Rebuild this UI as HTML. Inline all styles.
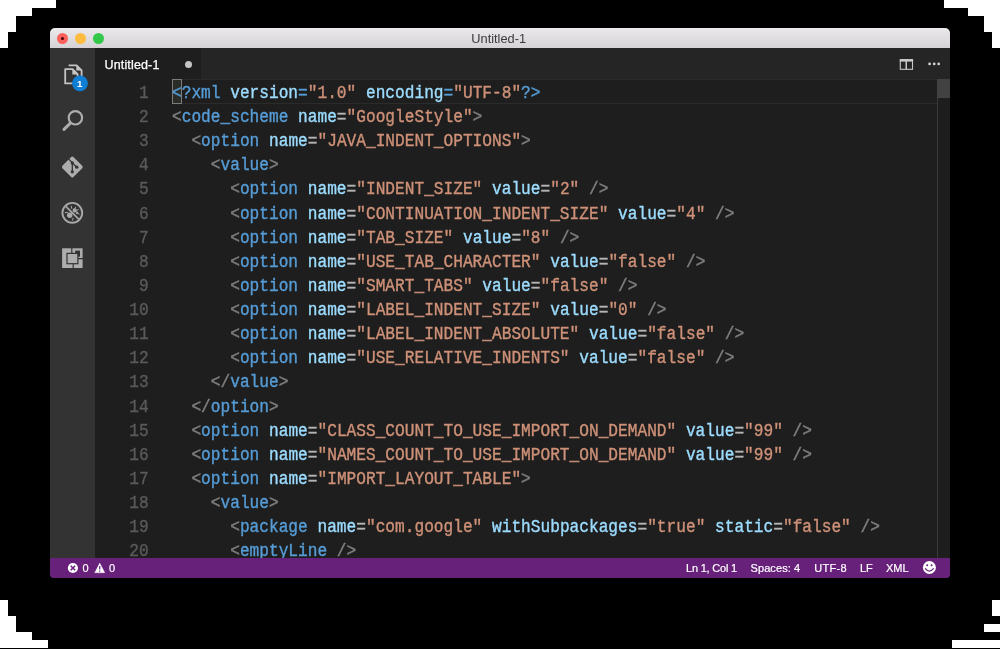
<!DOCTYPE html>
<html>
<head>
<meta charset="utf-8">
<title>Untitled-1</title>
<style>
  html, body { margin: 0; padding: 0; }
  body { width: 1000px; height: 649px; background: #000; overflow: hidden; position: relative; font-family: "Liberation Sans", sans-serif; }
  .w { position: absolute; background: #fff; }
  #win { will-change: transform; position: absolute; left: 50px; top: 28px; width: 900px; height: 550px; border-radius: 5px 5px 4px 4px; overflow: hidden; background: #1e1e1e; }
  #title { position: absolute; left: 0; top: 0; width: 900px; height: 20px; background: linear-gradient(#ebe9eb, #d4d2d4); }
  #title .t { position: absolute; left: -2.6px; right: 0; top: 0; height: 20px; line-height: 22.4px; text-align: center; font-size: 12.8px; color: #3a3a3a; }
  .tl { position: absolute; top: 5px; width: 11px; height: 11px; border-radius: 50%; }
  #act { position: absolute; left: 0; top: 20px; width: 45px; height: 510px; background: #333333; }
  #tabs { position: absolute; left: 45px; top: 20px; width: 855px; height: 31px; background: #252526; }
  #tab { position: absolute; left: 0; top: 0; width: 106px; height: 31px; background: #1e1e1e; color: #fff; font-size: 12.5px; line-height: 34px; }
  #tab span { position: absolute; left: 9.5px; letter-spacing: 0.15px; -webkit-text-stroke: 0.25px; }
  #tab i { position: absolute; left: 89.5px; top: 12.5px; width: 7px; height: 7px; border-radius: 50%; background: #c5c5c5; }
  #ed { position: absolute; left: 45px; top: 51px; width: 855px; height: 479px; background: #1e1e1e; overflow: hidden; }
  #cur { position: absolute; left: 77px; top: 0; width: 765px; height: 24.5px; box-sizing: border-box; border-top: 1px solid #2b2b2b; border-bottom: 1px solid #2b2b2b; }
  #bm { position: absolute; left: 76.5px; top: 0; width: 10.5px; height: 24.5px; box-sizing: border-box; border: 1px solid #7c7c7c; background: #2a2d27; }
  #code { position: absolute; left: 0; top: 0; font-family: "Liberation Mono", monospace; font-size: 16.17px; }
  .l { position: absolute; left: 0; height: 24px; line-height: 24px; white-space: pre; transform: scaleY(1.08); transform-origin: 0 16.3px; -webkit-text-stroke: 0.35px; }
  .n { position: absolute; left: 0; width: 53.6px; text-align: right; color: #5a5a5a; }
  .c { position: absolute; left: 77px; color: #808080; }
  .k { color: #569cd6; } .a { color: #9cdcfe; } .s { color: #ce9178; } .p { color: #808080; } .d { color: #b4b4b4; }
  #sb { position: absolute; left: 842px; top: 0; width: 13px; height: 479px; border-left: 1px solid #3a3a3a; box-sizing: border-box; }
  #sl { position: absolute; left: -1px; top: 0; width: 13px; height: 19px; background: #424242; }
  #status { position: absolute; left: 0; top: 530px; width: 900px; height: 20px; background: #68217a; color: #fff; font-size: 11px; line-height: 20px; }
  #status span { position: absolute; top: 0; white-space: pre; -webkit-text-stroke: 0.2px; }
</style>
</head>
<body>
<!-- corner artifacts -->
<div class="w" style="left:0;top:0;width:56px;height:8px"></div>
<div class="w" style="left:0;top:8px;width:32px;height:8px"></div>
<div class="w" style="left:0;top:16px;width:16px;height:16px"></div>
<div class="w" style="left:0;top:32px;width:8px;height:16px"></div>
<div class="w" style="left:944px;top:0;width:56px;height:8px"></div>
<div class="w" style="left:968px;top:8px;width:32px;height:8px"></div>
<div class="w" style="left:984px;top:16px;width:16px;height:16px"></div>
<div class="w" style="left:992px;top:32px;width:8px;height:16px"></div>
<div class="w" style="left:0;top:600px;width:8px;height:16px"></div>
<div class="w" style="left:0;top:616px;width:16px;height:16px"></div>
<div class="w" style="left:0;top:632px;width:32px;height:8px"></div>
<div class="w" style="left:0;top:640px;width:48px;height:8px"></div>
<div class="w" style="left:992px;top:600px;width:8px;height:16px"></div>
<div class="w" style="left:984px;top:624px;width:16px;height:8px"></div>
<div class="w" style="left:952px;top:640px;width:48px;height:8px"></div>

<div id="win">
  <div id="title">
    <div class="tl" style="left:7px;background:#fc605c"></div>
    <div class="tl" style="left:25px;background:#fdbc40"></div>
    <div class="tl" style="left:43px;background:#34c84a"></div>
    <div style="position:absolute;left:11px;top:9px;width:3px;height:3px;border-radius:50%;background:#4d0000"></div>
    <div class="t">Untitled-1</div>
  </div>
  <div id="act">
    <svg width="45" height="510" viewBox="0 0 45 510" style="position:absolute;left:0;top:0">
      <!-- explorer -->
      <g fill="none" stroke="#c4c4c4" stroke-width="1.8" stroke-linejoin="round">
        <path d="M18.6 17.3 H26.6 L31.6 22.3 V33.4 H28.4"/>
        <path d="M15.2 21.2 H22.6 L27.6 26.2 V35.4 H15.2 Z"/>
      </g>
      <path d="M22.3 21 V26.6 H27.9 Z" fill="#c4c4c4"/>
      <path d="M26.3 17 V22.6 H31.9 Z" fill="#c4c4c4"/>
      <circle cx="30" cy="35.3" r="7.9" fill="#0f7fd6"/>
      <text x="29.8" y="38.8" style="font-family:'Liberation Sans',sans-serif;font-weight:bold;font-size:9.8px" fill="#fff" text-anchor="middle">1</text>
      <!-- search -->
      <circle cx="25.4" cy="69.8" r="6.7" fill="none" stroke="#adadad" stroke-width="2.2"/>
      <path d="M20.4 75.1 L14 81.4" stroke="#adadad" stroke-width="3" stroke-linecap="round"/>
      <!-- git -->
      <rect x="14.5" y="111.2" width="15.6" height="15.6" rx="1.6" transform="rotate(45 22.3 119)" fill="#adadad"/>
      <g stroke="#333" stroke-width="1.3" fill="none">
        <path d="M18.6 110.9 L22.3 114.9 L26.8 119.2 M22.3 114.9 V123.8"/>
      </g>
      <circle cx="22.3" cy="114.9" r="1.6" fill="#333"/>
      <circle cx="26.8" cy="119.2" r="1.6" fill="#333"/>
      <circle cx="22.3" cy="123.8" r="1.6" fill="#333"/>
      <!-- debug -->
      <circle cx="22.3" cy="164.8" r="9.9" fill="none" stroke="#a8a8a8" stroke-width="1.9"/>
      <path d="M15.6 158.1 L29.2 171.6" stroke="#a8a8a8" stroke-width="1.7"/>
      <g fill="#a8a8a8">
        <circle cx="19.7" cy="167.3" r="2.7"/>
        <circle cx="24.7" cy="162.4" r="2.1"/>
        <circle cx="27" cy="164.8" r="1.2"/>
      </g>
      <g stroke="#a8a8a8" stroke-width="1" fill="none">
        <path d="M21.2 157.8 L21.8 160.8 M25.9 158.9 L24.5 161.1 M28.7 161.5 L26.3 162.6 M29.6 166.1 L27.2 165.5 M14.8 164.7 L18 164.3 M22.6 172.6 L23.1 169.8"/>
      </g>
      <!-- extensions -->
      <rect x="12.1" y="200.3" width="20.5" height="19.7" fill="#adadad"/>
      <g stroke="#333" stroke-width="1.2" fill="none">
        <path d="M21.8 200 V205.6 M23.2 215.6 V220.4 M27.9 210.6 H33"/>
        <rect x="17" y="205.4" width="10.9" height="10.3"/>
      </g>
      <rect x="25.2" y="202.6" width="4.8" height="3.4" fill="#333"/>
      <rect x="27.9" y="204.6" width="2.1" height="4" fill="#333"/>
    </svg>
  </div>
  <div id="tabs">
    <div id="tab"><span>Untitled-1</span><i></i></div>
    <svg width="60" height="31" viewBox="0 0 60 31" style="position:absolute;left:795px;top:0">
      <!-- page x = 890 + x ; page y = 48 + y -->
      <rect x="10.3" y="12.1" width="12.2" height="9.2" fill="none" stroke="#c8c8c8" stroke-width="1.1"/>
      <rect x="9.8" y="11" width="13.3" height="2.6" fill="#c8c8c8"/>
      <rect x="15.5" y="11.5" width="1.5" height="10" fill="#c8c8c8"/>
      <circle cx="39.6" cy="15.9" r="1.35" fill="#d4d4d4"/>
      <circle cx="44.2" cy="15.9" r="1.35" fill="#d4d4d4"/>
      <circle cx="48.7" cy="15.9" r="1.35" fill="#d4d4d4"/>
    </svg>
  </div>
  <div id="ed">
    <div id="cur"></div>
    <div id="bm"></div>
    <div id="code">
<div class="l" style="top:2.90px"><span class="n">1</span><span class="c"><span class="k">&lt;?xml</span> <span class="a">version</span><span class="k">=</span><span class="s">"1.0"</span> <span class="a">encoding</span><span class="k">=</span><span class="s">"UTF-8"</span><span class="k">?&gt;</span></span></div>
<div class="l" style="top:27.03px"><span class="n">2</span><span class="c">&lt;<span class="k">code_scheme</span> <span class="a">name</span><span class="d">=</span><span class="s">"GoogleStyle"</span>&gt;</span></div>
<div class="l" style="top:51.16px"><span class="n">3</span><span class="c">  &lt;<span class="k">option</span> <span class="a">name</span><span class="d">=</span><span class="s">"JAVA_INDENT_OPTIONS"</span>&gt;</span></div>
<div class="l" style="top:75.29px"><span class="n">4</span><span class="c">    &lt;<span class="k">value</span>&gt;</span></div>
<div class="l" style="top:99.42px"><span class="n">5</span><span class="c">      &lt;<span class="k">option</span> <span class="a">name</span><span class="d">=</span><span class="s">"INDENT_SIZE"</span> <span class="a">value</span><span class="d">=</span><span class="s">"2"</span> /&gt;</span></div>
<div class="l" style="top:123.55px"><span class="n">6</span><span class="c">      &lt;<span class="k">option</span> <span class="a">name</span><span class="d">=</span><span class="s">"CONTINUATION_INDENT_SIZE"</span> <span class="a">value</span><span class="d">=</span><span class="s">"4"</span> /&gt;</span></div>
<div class="l" style="top:147.68px"><span class="n">7</span><span class="c">      &lt;<span class="k">option</span> <span class="a">name</span><span class="d">=</span><span class="s">"TAB_SIZE"</span> <span class="a">value</span><span class="d">=</span><span class="s">"8"</span> /&gt;</span></div>
<div class="l" style="top:171.81px"><span class="n">8</span><span class="c">      &lt;<span class="k">option</span> <span class="a">name</span><span class="d">=</span><span class="s">"USE_TAB_CHARACTER"</span> <span class="a">value</span><span class="d">=</span><span class="s">"false"</span> /&gt;</span></div>
<div class="l" style="top:195.94px"><span class="n">9</span><span class="c">      &lt;<span class="k">option</span> <span class="a">name</span><span class="d">=</span><span class="s">"SMART_TABS"</span> <span class="a">value</span><span class="d">=</span><span class="s">"false"</span> /&gt;</span></div>
<div class="l" style="top:220.07px"><span class="n">10</span><span class="c">      &lt;<span class="k">option</span> <span class="a">name</span><span class="d">=</span><span class="s">"LABEL_INDENT_SIZE"</span> <span class="a">value</span><span class="d">=</span><span class="s">"0"</span> /&gt;</span></div>
<div class="l" style="top:244.20px"><span class="n">11</span><span class="c">      &lt;<span class="k">option</span> <span class="a">name</span><span class="d">=</span><span class="s">"LABEL_INDENT_ABSOLUTE"</span> <span class="a">value</span><span class="d">=</span><span class="s">"false"</span> /&gt;</span></div>
<div class="l" style="top:268.33px"><span class="n">12</span><span class="c">      &lt;<span class="k">option</span> <span class="a">name</span><span class="d">=</span><span class="s">"USE_RELATIVE_INDENTS"</span> <span class="a">value</span><span class="d">=</span><span class="s">"false"</span> /&gt;</span></div>
<div class="l" style="top:292.46px"><span class="n">13</span><span class="c">    &lt;/<span class="k">value</span>&gt;</span></div>
<div class="l" style="top:316.59px"><span class="n">14</span><span class="c">  &lt;/<span class="k">option</span>&gt;</span></div>
<div class="l" style="top:340.72px"><span class="n">15</span><span class="c">  &lt;<span class="k">option</span> <span class="a">name</span><span class="d">=</span><span class="s">"CLASS_COUNT_TO_USE_IMPORT_ON_DEMAND"</span> <span class="a">value</span><span class="d">=</span><span class="s">"99"</span> /&gt;</span></div>
<div class="l" style="top:364.85px"><span class="n">16</span><span class="c">  &lt;<span class="k">option</span> <span class="a">name</span><span class="d">=</span><span class="s">"NAMES_COUNT_TO_USE_IMPORT_ON_DEMAND"</span> <span class="a">value</span><span class="d">=</span><span class="s">"99"</span> /&gt;</span></div>
<div class="l" style="top:388.98px"><span class="n">17</span><span class="c">  &lt;<span class="k">option</span> <span class="a">name</span><span class="d">=</span><span class="s">"IMPORT_LAYOUT_TABLE"</span>&gt;</span></div>
<div class="l" style="top:413.11px"><span class="n">18</span><span class="c">    &lt;<span class="k">value</span>&gt;</span></div>
<div class="l" style="top:437.24px"><span class="n">19</span><span class="c">      &lt;<span class="k">package</span> <span class="a">name</span><span class="d">=</span><span class="s">"com.google"</span> <span class="a">withSubpackages</span><span class="d">=</span><span class="s">"true"</span> <span class="a">static</span><span class="d">=</span><span class="s">"false"</span> /&gt;</span></div>
<div class="l" style="top:461.37px"><span class="n">20</span><span class="c">      &lt;<span class="k">emptyLine</span> /&gt;</span></div>

</div>
    <div id="sb"><div id="sl"></div></div>
  </div>
  <div id="status">
    <svg width="900" height="20" viewBox="0 0 900 20" style="position:absolute;left:0;top:0">
      <circle cx="22.9" cy="10" r="5.1" fill="#fff"/>
      <path d="M20.7 7.8 L25.1 12.2 M25.1 7.8 L20.7 12.2" stroke="#68217a" stroke-width="1.5"/>
      <path d="M49.75 4.9 L54.8 14.8 H44.7 Z" fill="#fff" stroke="#fff" stroke-width="0.3" stroke-linejoin="round"/>
      <path d="M49.75 8 V11.6 M49.75 12.6 V13.8" stroke="#68217a" stroke-width="1.2"/>
      <circle cx="879.4" cy="9.5" r="6.5" fill="#fff"/>
      <circle cx="877.2" cy="7.3" r="1" fill="#68217a"/>
      <circle cx="881.6" cy="7.3" r="1" fill="#68217a"/>
      <path d="M875.4 10.6 Q879.4 15.6 883.4 10.6" fill="none" stroke="#68217a" stroke-width="1.2" stroke-linecap="round"/>
    </svg>
    <span style="left:32.6px">0</span>
    <span style="left:59px">0</span>
    <span style="left:636px;letter-spacing:-0.21px">Ln 1, Col 1</span>
    <span style="left:700.5px;letter-spacing:0.1px">Spaces: 4</span>
    <span style="left:764.3px;letter-spacing:0.3px">UTF-8</span>
    <span style="left:810px">LF</span>
    <span style="left:836px">XML</span>
  </div>
</div>
</body>
</html>
